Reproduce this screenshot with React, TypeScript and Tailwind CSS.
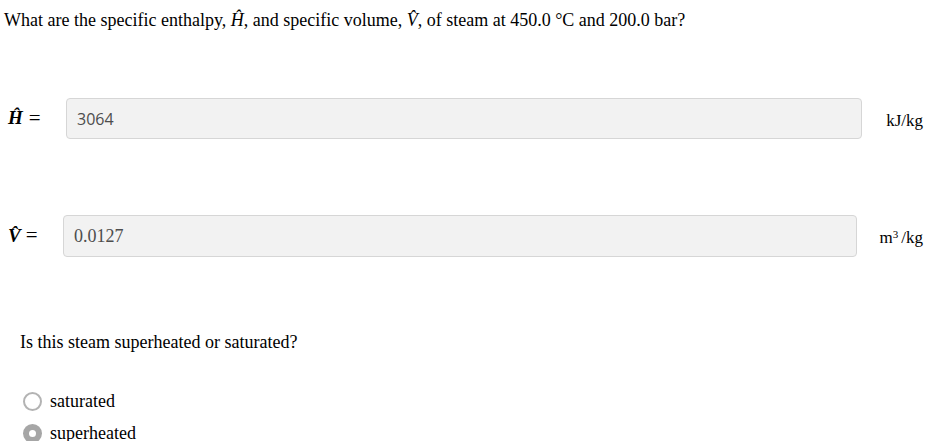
import React from "react";

const serif = { fontFamily: '"Liberation Serif", "Times New Roman", serif' };

export default function App() {
  return (
    <div className="w-[934px] h-[441px] overflow-hidden bg-white text-black font-['Liberation_Serif',serif]">
      <div className="pl-[4px] pt-[9px] text-[18px] leading-[22px]">
        What are the specific enthalpy, <i>Ĥ</i>, and specific volume, <i>V̂</i>, of steam at 450.0 °C and 200.0 bar?
      </div>

      <div className="mt-[67px] flex items-center h-[41px]">
        <div className="w-[66px] pl-[8px] flex items-center text-[19px]">
          <i className="font-bold">Ĥ</i>
          <span className="ml-[6px] text-[21px]">=</span>
        </div>
        <div className="flex-1 h-[41px] rounded-[4px] border border-[#d6d6d6] bg-[#f2f2f2] flex items-center pl-[10px] text-[16px] text-[#4d4d4d] font-['Open_Sans',sans-serif]">
          3064
        </div>
        <div className="w-[72px] pr-[11px] text-right text-[17px] pt-[4px]">kJ/kg</div>
      </div>

      <div className="mt-[76px] flex items-center h-[42px]">
        <div className="w-[63px] pl-[8px] flex items-center text-[19px]">
          <i className="font-bold">V̂</i>
          <span className="ml-[5px] text-[21px]">=</span>
        </div>
        <div className="flex-1 h-[42px] rounded-[4px] border border-[#d6d6d6] bg-[#f2f2f2] flex items-center pl-[10px] text-[18px] text-[#4d4d4d]" style={serif}>
          0.0127
        </div>
        <div className="w-[77px] pr-[11px] text-right text-[17px] pt-[4px]">
          m<sup className="text-[11px] mr-[3px]">3</sup>/kg
        </div>
      </div>

      <div className="mt-[73px] pl-[20px] text-[18px] leading-[24px]">Is this steam superheated or saturated?</div>

      <div className="mt-[37px] pl-[23px] flex flex-col gap-[12px]">
        <label className="flex items-center gap-[8px] h-[20px] text-[18px]">
          <span className="w-[19px] h-[19px] rounded-full border-2 border-[#b3b3b3] bg-white" />
          <span>saturated</span>
        </label>
        <label className="flex items-center gap-[8px] h-[20px] text-[18px]">
          <span className="w-[19px] h-[19px] rounded-full bg-[#a6a6a6] flex items-center justify-center">
            <span className="w-[7px] h-[7px] rounded-full bg-white" />
          </span>
          <span>superheated</span>
        </label>
      </div>
    </div>
  );
}
